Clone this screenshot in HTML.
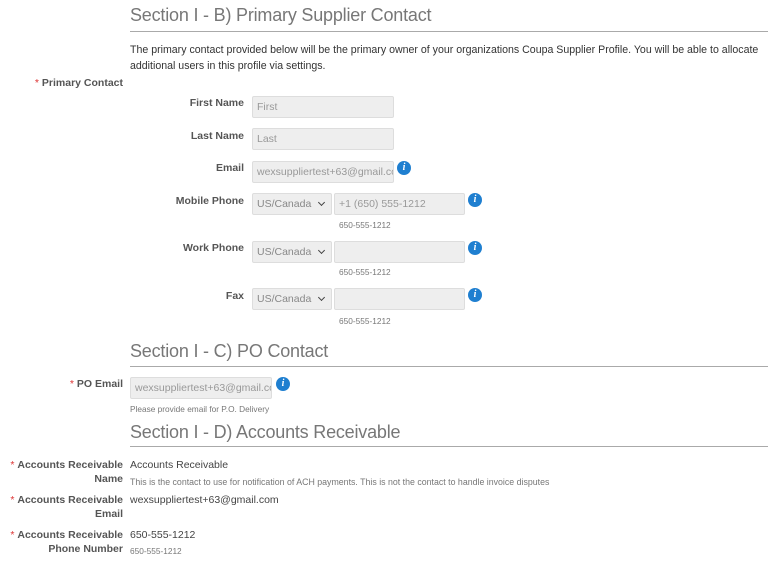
<!DOCTYPE html>
<html><head><style>
body{margin:0;width:768px;height:563px;background:#fff;font-family:"Liberation Sans",Arial,sans-serif;position:relative;overflow:hidden;color:#333}
div,span{position:absolute}
.h{left:130px;font-size:18px;color:#777;font-weight:300;white-space:nowrap;letter-spacing:-0.2px}
.ln{left:130px;right:0;height:1px;background:#aaa}
.lb{font-size:10.5px;font-weight:bold;color:#555;text-align:right;white-space:nowrap;line-height:14px}
.r{color:#d33;font-weight:normal}
.in{background:#eee;border:1px solid #ddd;border-radius:2px;height:21px;box-sizing:border-box;font-size:10.5px;color:#999;padding:4px 4px;white-space:nowrap;overflow:hidden}
.sel{background:#eee;border:1px solid #ddd;border-radius:2px;height:22px;width:80px;box-sizing:border-box;font-size:10.5px;color:#888;padding:4px 4px}
.sel:after{content:"";position:absolute;right:7px;top:6px;width:4px;height:4px;border-right:1.5px solid #444;border-bottom:1.5px solid #444;transform:rotate(45deg)}
.i{width:14px;height:14px;border-radius:50%;background:#1f7fd0;color:#fff;font-size:10px;font-weight:bold;font-style:italic;text-align:center;line-height:14px;font-family:"Liberation Serif",serif}
.hint{font-size:8.3px;color:#777;white-space:nowrap}
.t{font-size:10.5px;color:#444;white-space:nowrap}
</style></head><body>
<div class="h" style="top:5px">Section I - B) Primary Supplier Contact</div>
<div class="ln" style="top:31px"></div>
<div class="t" style="left:130px;top:42px;font-size:10.6px;line-height:16px;color:#333">The primary contact provided below will be the primary owner of your organizations Coupa Supplier Profile. You will be able to allocate<br>additional users in this profile via settings.</div>
<div class="lb" style="right:645px;top:76px"><span class="r" style="position:static">* </span>Primary Contact</div>

<div class="lb" style="right:524px;top:96px">First Name</div>
<div class="in" style="left:252px;top:96px;width:142px;height:22px">First</div>
<div class="lb" style="right:524px;top:129px">Last Name</div>
<div class="in" style="left:252px;top:128px;width:142px;height:22px">Last</div>
<div class="lb" style="right:524px;top:161px">Email</div>
<div class="in" style="left:252px;top:161px;width:142px;height:22px">wexsuppliertest+63@gmail.com</div>
<div class="i" style="left:397px;top:161px">i</div>

<div class="lb" style="right:524px;top:194px">Mobile Phone</div>
<div class="sel" style="left:252px;top:193px">US/Canada</div>
<div class="in" style="left:334px;top:193px;width:131px;height:22px">+1 (650) 555-1212</div>
<div class="i" style="left:468px;top:193px">i</div>
<div class="hint" style="left:339px;top:220px">650-555-1212</div>

<div class="lb" style="right:524px;top:241px">Work Phone</div>
<div class="sel" style="left:252px;top:241px">US/Canada</div>
<div class="in" style="left:334px;top:241px;width:131px;height:22px"></div>
<div class="i" style="left:468px;top:241px">i</div>
<div class="hint" style="left:339px;top:267px">650-555-1212</div>

<div class="lb" style="right:524px;top:289px">Fax</div>
<div class="sel" style="left:252px;top:288px">US/Canada</div>
<div class="in" style="left:334px;top:288px;width:131px;height:22px"></div>
<div class="i" style="left:468px;top:288px">i</div>
<div class="hint" style="left:339px;top:316px">650-555-1212</div>

<div class="h" style="top:341px">Section I - C) PO Contact</div>
<div class="ln" style="top:366px"></div>
<div class="lb" style="right:645px;top:377px"><span class="r" style="position:static">* </span>PO Email</div>
<div class="in" style="left:130px;top:377px;width:142px;height:22px">wexsuppliertest+63@gmail.com</div>
<div class="i" style="left:276px;top:377px">i</div>
<div class="hint" style="left:130px;top:404px">Please provide email for P.O. Delivery</div>

<div class="h" style="top:422px">Section I - D) Accounts Receivable</div>
<div class="ln" style="top:446px"></div>

<div class="lb" style="right:645px;top:458px"><span class="r" style="position:static">* </span>Accounts Receivable<br>Name</div>
<div class="t" style="left:130px;top:459px">Accounts Receivable</div>
<div class="hint" style="left:130px;top:477px;font-size:8.8px">This is the contact to use for notification of ACH payments. This is not the contact to handle invoice disputes</div>

<div class="lb" style="right:645px;top:493px"><span class="r" style="position:static">* </span>Accounts Receivable<br>Email</div>
<div class="t" style="left:130px;top:494px">wexsuppliertest+63@gmail.com</div>

<div class="lb" style="right:645px;top:528px"><span class="r" style="position:static">* </span>Accounts Receivable<br>Phone Number</div>
<div class="t" style="left:130px;top:529px">650-555-1212</div>
<div class="hint" style="left:130px;top:546px">650-555-1212</div>
</body></html>
